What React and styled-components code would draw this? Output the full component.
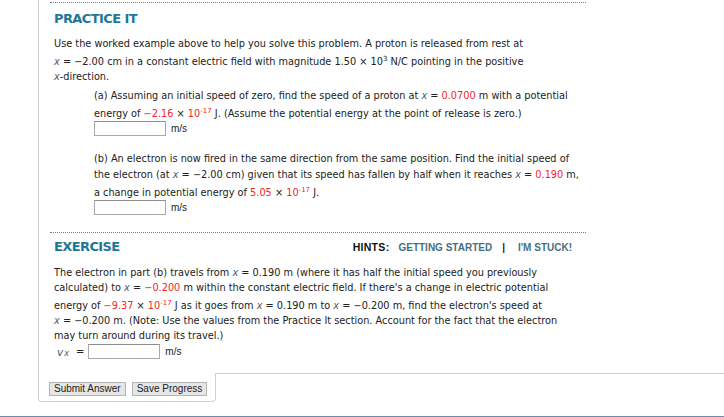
import React from "react";
import styled, { createGlobalStyle } from "styled-components";

const GlobalStyle = createGlobalStyle`
  html, body { margin: 0; padding: 0; background: #fff; }
  body { font-family: "DejaVu Sans", Verdana, sans-serif; color: #222; }
`;

const Frame = styled.div`
  margin-left: 38px;
  width: 686px;
`;

const Main = styled.div`
  border-left: 1px solid #cfcfcf;
  padding: 2px 0 14px 11px;
`;

const Section = styled.section`
  width: 528px;
  border-top: 1px dotted #7a7a7a;
  padding: 0 4px;
  margin-top: ${(p) => p.$gap || 0}px;
`;

const HeaderRow = styled.div`
  display: flex;
  align-items: baseline;
  justify-content: space-between;
  padding-right: 10px;
  margin-top: ${(p) => p.$top}px;
`;

const Heading = styled.h2`
  margin: 0;
  font-family: "DejaVu Sans", Verdana, sans-serif;
  font-weight: bold;
  font-size: 13px;
  letter-spacing: -0.6px;
  color: #1d7898;
  line-height: 14px;
`;

const Hints = styled.div`
  display: flex;
  align-items: baseline;
  font-family: "Liberation Sans", Arial, sans-serif;
  font-weight: bold;
  font-size: 10px;
  gap: 9px;
`;

const HintLabel = styled.span`
  color: #111;
  font-size: 10.5px;
  letter-spacing: 0.3px;
  margin-left: -3px;
`;

const HintLink = styled.span`
  color: #46707f;
`;

const HintSep = styled.span`
  color: #222;
  padding: 0 4px 0 1px;
`;

const Para = styled.div`
  margin: ${(p) => p.$top || 0}px 0 0 0;
  font-size: 9.75px;
  line-height: 15px;
  white-space: nowrap;
`;

const Line = styled.div`
  padding-top: ${(p) => p.$pad || 0}px;
`;

const Part = styled.div`
  margin: ${(p) => p.$top || 0}px 0 0 40px;
`;

const Var = styled.i`
  font-style: italic;
  color: #555a6a;
`;

const Red = styled.span`
  color: #f0262a;
`;

const Sup = styled.sup`
  font-size: 7px;
  vertical-align: 4px;
  line-height: 0;
`;

const AnswerRow = styled.div`
  display: flex;
  align-items: center;
  gap: 5px;
  font-family: "Liberation Sans", Arial, sans-serif;
  font-size: 10px;
  color: #222;
  margin: ${(p) => p.$top || 0}px 0 0 ${(p) => p.$indent || 0}px;
`;

const Input = styled.input`
  box-sizing: border-box;
  width: 72px;
  height: 15px;
  margin: 0;
  padding: 0 2px;
  border: 1px solid #a9a9a9;
  border-top-color: #8f8f8f;
  background: #fff;
  font-size: 10px;
`;

const VLabel = styled.span`
  display: inline-flex;
  align-items: baseline;
  font-family: "DejaVu Sans", Verdana, sans-serif;
  font-style: italic;
  font-size: 10.5px;
  color: #555a6a;
  margin-right: 2px;
`;

const Sub = styled.sub`
  font-size: 8px;
  vertical-align: -3px;
  line-height: 0;
  margin-left: 1px;
`;

const Eq = styled.span`
  font-family: "DejaVu Sans", Verdana, sans-serif;
  font-size: 10px;
  margin-right: -1px;
`;

const BottomRow = styled.div`
  display: flex;
`;

const Tab = styled.div`
  box-sizing: border-box;
  width: 178px;
  border: 1px solid #cfcfcf;
  border-top: none;
  border-radius: 0 0 4px 4px;
  padding: 9px 0 5px 10px;
  display: flex;
  gap: 6px;
`;

const Filler = styled.div`
  flex: 1;
  border-top: 1px solid #cfcfcf;
`;

const Button = styled.button`
  font-family: "Liberation Sans", Arial, sans-serif;
  font-size: 10px;
  color: #222;
  background: #e6e6e6;
  border: 1px solid #b4b4b4;
  border-radius: 0;
  padding: 0 4px;
  height: 14px;
  line-height: 12px;
`;

const FooterBar = styled.div`
  margin-top: 14px;
  height: 2px;
  border-top: 1px solid #6d8cab;
  background: #a9c6e3;
`;

export default function App() {
  return (
    <>
      <GlobalStyle />
      <Frame>
        <Main>
          <Section>
            <HeaderRow $top={9}>
              <Heading>PRACTICE IT</Heading>
            </HeaderRow>
            <Para $top={10}>
              <Line>Use the worked example above to help you solve this problem. A proton is released from rest at</Line>
              <Line $pad={3}>
                <Var>x</Var> = −2.00 cm in a constant electric field with magnitude 1.50 × 10<Sup>3</Sup> N/C pointing in the positive
              </Line>
              <Line>
                <Var>x</Var>-direction.
              </Line>
            </Para>
            <Part $top={4}>
              <Para>
                <Line>
                  (a) Assuming an initial speed of zero, find the speed of a proton at <Var>x</Var> = <Red>0.0700</Red> m with a potential
                </Line>
                <Line $pad={3}>
                  energy of <Red>−2.16</Red> × <Red>10<Sup>-17</Sup></Red> J. (Assume the potential energy at the point of release is zero.)
                </Line>
              </Para>
              <AnswerRow $top={0}>
                <Input aria-label="speed of proton" />
                <span>m/s</span>
              </AnswerRow>
            </Part>
            <Part $top={15}>
              <Para>
                <Line>
                  (b) An electron is now fired in the same direction from the same position. Find the initial speed of
                </Line>
                <Line $pad={1}>
                  the electron (at <Var>x</Var> = −2.00 cm) given that its speed has fallen by half when it reaches <Var>x</Var> = <Red>0.190</Red> m,
                </Line>
                <Line $pad={3}>
                  a change in potential energy of <Red>5.05</Red> × <Red>10<Sup>-17</Sup></Red> J.
                </Line>
              </Para>
              <AnswerRow $top={0}>
                <Input aria-label="initial speed of electron" />
                <span>m/s</span>
              </AnswerRow>
            </Part>
          </Section>
          <Section $gap={17}>
            <HeaderRow $top={7}>
              <Heading>EXERCISE</Heading>
              <Hints>
                <HintLabel>HINTS:</HintLabel>
                <HintLink>GETTING STARTED</HintLink>
                <HintSep>|</HintSep>
                <HintLink>I'M STUCK!</HintLink>
              </Hints>
            </HeaderRow>
            <Para $top={11}>
              <Line>
                The electron in part (b) travels from <Var>x</Var> = 0.190 m (where it has half the initial speed you previously
              </Line>
              <Line>
                calculated) to <Var>x</Var> = <Red>−0.200</Red> m within the constant electric field. If there's a change in electric potential
              </Line>
              <Line $pad={3}>
                energy of <Red>−9.37</Red> × <Red>10<Sup>-17</Sup></Red> J as it goes from <Var>x</Var> = 0.190 m to <Var>x</Var> = −0.200 m, find the electron's speed at
              </Line>
              <Line>
                <Var>x</Var> = −0.200 m. (Note: Use the values from the Practice It section. Account for the fact that the electron
              </Line>
              <Line>may turn around during its travel.)</Line>
            </Para>
            <AnswerRow $indent={3} $top={1}>
              <VLabel>
                v<Sub>x</Sub>
              </VLabel>
              <Eq>=</Eq>
              <Input aria-label="electron speed" />
              <span>m/s</span>
            </AnswerRow>
          </Section>
        </Main>
        <BottomRow>
          <Tab>
            <Button type="button">Submit Answer</Button>
            <Button type="button">Save Progress</Button>
          </Tab>
          <Filler />
        </BottomRow>
      </Frame>
      <FooterBar />
    </>
  );
}
